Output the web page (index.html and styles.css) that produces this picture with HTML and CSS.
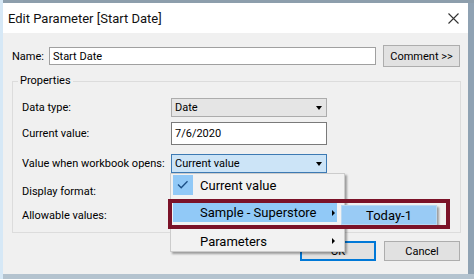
FILE: index.html
```html
<!DOCTYPE html>
<html lang="en">
<head>
  <meta charset="UTF-8" />
  <title>Edit Parameter [Start Date]</title>
  <link rel="stylesheet" href="styles.css">
</head>
<body>
  <div class="desktop">
    <div class="dialog">
      <div class="titlebar">
        <span class="title">Edit Parameter [Start Date]</span>
        <svg class="close" width="11" height="11" viewBox="0 0 11 11">
          <path d="M0.5 0.5 L10.5 10.5 M10.5 0.5 L0.5 10.5" stroke="#333" stroke-width="1.1" fill="none" />
        </svg>
      </div>
      <div class="content">
        <div class="name-row">
          <span class="name-label">Name:</span>
          <div class="textbox name-box">Start Date</div>
          <div class="btn comment">Comment &gt;&gt;</div>
        </div>
        <fieldset class="props">
          <legend>Properties</legend>
          <div class="row row-type">
            <span class="lbl">Data type:</span>
            <div class="combo">Date<span class="down"></span></div>
          </div>
          <div class="row row-current">
            <span class="lbl">Current value:</span>
            <div class="textbox value-box">7/6/2020</div>
          </div>
          <div class="row row-opens">
            <span class="lbl">Value when workbook opens:</span>
            <div class="combo combo-open">Current value<span class="down"></span></div>
          </div>
          <div class="row row-format">
            <span class="lbl">Display format:</span>
          </div>
          <div class="row row-allow">
            <span class="lbl">Allowable values:</span>
          </div>
        </fieldset>
        <div class="buttons">
          <div class="btn btn-ok">OK</div>
          <div class="btn">Cancel</div>
        </div>
      </div>
    </div>
  </div>

  <!-- dropdown menu opened from "Value when workbook opens" -->
  <div class="menu">
    <div class="item item-checked">
      <span class="check">
        <svg width="20" height="20" viewBox="0 0 20 20">
          <path d="M5 9.5 L8.2 12.8 L14.5 6.2" stroke="#1b4f86" stroke-width="1.3" fill="none" />
        </svg>
      </span>
      <span>Current value</span>
    </div>
    <div class="item item-hot">
      <span>Sample - Superstore</span>
      <span class="right"></span>
    </div>
    <div class="item">
      <span>Parameters</span>
      <span class="right"></span>
    </div>
  </div>
  <div class="submenu">Today-1</div>
  <div class="callout"></div>
</body>
</html>
```

FILE: styles.css
```css
body {
  margin: 0;
  font-family: Roboto, "Open Sans", sans-serif;
  font-size: 11px;
  color: #000;
}
.desktop {
  width: 474px;
  height: 279px;
  box-sizing: border-box;
  padding-top: 3px;
  border-left: 3px solid #d6e8f6;
  background: linear-gradient(#8d9eac, #8d9eac) top / 100% 3px no-repeat,
              linear-gradient(#b4c3cf, #b4c3cf) bottom / 100% 5px no-repeat,
              #8fa2b3;
  overflow: hidden;
}
.dialog {
  width: 465px;
  height: 271px;
  background: #f0f0f0;
}
.titlebar {
  height: 30px;
  background: #fff;
  display: flex;
  align-items: center;
  justify-content: space-between;
  padding: 0 9px 0 5px;
}
.title {
  font-size: 13px;
  color: #111;
  margin-top: 1px;
}
.close {
  margin-top: 1px;
}
.content {
  padding: 12px 8px 0 9px;
}
.name-row {
  display: flex;
  align-items: center;
  height: 22px;
}
.name-label {
  width: 37px;
}
.textbox {
  box-sizing: border-box;
  background: #fff;
  border: 1px solid #7a7a7a;
  padding-left: 3px;
  display: flex;
  align-items: center;
}
.name-box {
  width: 327px;
  height: 18px;
  border-color: #a0a0a0;
}
.btn {
  box-sizing: border-box;
  width: 76px;
  height: 20px;
  background: #e1e1e1;
  border: 1px solid #adadad;
  display: flex;
  align-items: center;
  justify-content: center;
}
.comment {
  width: 77px;
  height: 22px;
  margin-left: 7px;
}
.props {
  box-sizing: border-box;
  width: 449px;
  height: 160px;
  margin: 6px 0 0 0;
  padding: 0 0 0 9px;
  border: 1px solid #dcdcdc;
}
.props legend {
  padding: 0 2px;
  margin-left: -4px;
  line-height: 16px;
}
.row {
  display: flex;
  align-items: center;
  height: 20px;
}
.lbl {
  width: 149px;
  white-space: nowrap;
}
.row-type {
  height: 19px;
  margin-top: 9px;
}
.row-current {
  height: 23px;
  margin-top: 5px;
}
.row-opens {
  height: 19px;
  margin-top: 9px;
}
.row-format {
  margin-top: 8px;
}
.row-allow {
  margin-top: 4px;
}
.combo {
  box-sizing: border-box;
  width: 156px;
  height: 19px;
  background: #e5e5e5;
  border: 1px solid #acacac;
  padding-left: 3px;
  display: flex;
  align-items: center;
  justify-content: space-between;
}
.combo-open {
  background: #cce4f7;
  border-color: #3d7ab3;
}
.down {
  width: 0;
  height: 0;
  margin-right: 4px;
  border-left: 3.5px solid transparent;
  border-right: 3.5px solid transparent;
  border-top: 4px solid #000;
}
.value-box {
  width: 156px;
  height: 23px;
}
.buttons {
  display: flex;
  justify-content: flex-end;
  gap: 8px;
  margin-top: 8px;
}
.btn-ok {
  border: 2px solid #0078d7;
}

/* popup menu and annotation lie over the dialog */
.menu {
  position: absolute;
  left: 170px;
  top: 173px;
  width: 175px;
  height: 79px;
  box-sizing: border-box;
  background: #f2f2f2;
  border: 1px solid #cccccc;
  box-shadow: 2px 2px 2px rgba(0, 0, 0, 0.35);
  padding: 1px 7px 0 2px;
  font-size: 13px;
}
.item {
  display: flex;
  align-items: center;
  height: 20px;
  padding-left: 27px;
  position: relative;
}
.item-checked {
  padding-left: 0;
}
.check {
  width: 20px;
  height: 20px;
  background: #91c9f7;
  margin-right: 7px;
}
.item-hot {
  margin-top: 8px;
  height: 19px;
  background: #91c9f7;
}
.item-hot + .item {
  margin-top: 10px;
  height: 18px;
}
.right {
  position: absolute;
  right: 2px;
  width: 0;
  height: 0;
  border-top: 3px solid transparent;
  border-bottom: 3px solid transparent;
  border-left: 3.5px solid #000;
}
.submenu {
  position: absolute;
  left: 341px;
  top: 205px;
  width: 96px;
  height: 20px;
  background: #99cbf5;
  border: 1px solid #b8d8f2;
  box-sizing: border-box;
  box-shadow: 2px 2px 2px rgba(0, 0, 0, 0.35);
  display: flex;
  align-items: center;
  justify-content: center;
  font-size: 13px;
}
.callout {
  position: absolute;
  left: 168px;
  top: 199px;
  width: 282px;
  height: 30px;
  box-sizing: border-box;
  border: 4px solid #7b1228;
}
```
